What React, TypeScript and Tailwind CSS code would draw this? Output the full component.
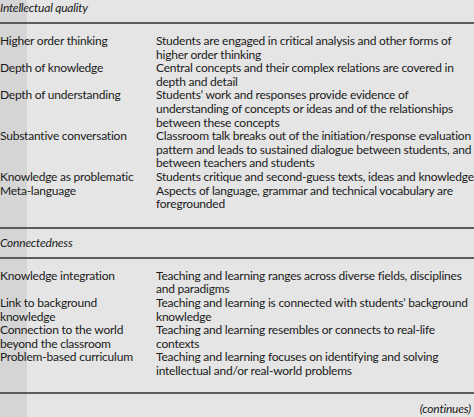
const intellectual: [string[], string[]][] = [
  [["Higher order thinking"], ["Students are engaged in critical analysis and other forms of", "higher order thinking"]],
  [["Depth of knowledge"], ["Central concepts and their complex relations are covered in", "depth and detail"]],
  [["Depth of understanding"], ["Students’ work and responses provide evidence of", "understanding of concepts or ideas and of the relationships", "between these concepts"]],
  [["Substantive conversation"], ["Classroom talk breaks out of the initiation/response evaluation", "pattern and leads to sustained dialogue between students, and", "between teachers and students"]],
  [["Knowledge as problematic"], ["Students critique and second-guess texts, ideas and knowledge"]],
  [["Meta-language"], ["Aspects of language, grammar and technical vocabulary are", "foregrounded"]],
];

const connectedness: [string[], string[]][] = [
  [["Knowledge integration"], ["Teaching and learning ranges across diverse fields, disciplines", "and paradigms"]],
  [["Link to background", "knowledge"], ["Teaching and learning is connected with students’ background", "knowledge"]],
  [["Connection to the world", "beyond the classroom"], ["Teaching and learning resembles or connects to real-life", "contexts"]],
  [["Problem-based curriculum"], ["Teaching and learning focuses on identifying and solving", "intellectual and/or real-world problems"]],
];

const Rule = ({ className = "" }: { className?: string }) => (
  <div className={`h-[2px] w-full bg-[#5c5c5c] ${className}`} />
);

const Rows = ({ rows }: { rows: [string[], string[]][] }) => (
  <div className="flex flex-col">
    {rows.map(([term, desc], i) => (
      <div key={i} className="flex">
        <div className="w-[156px] shrink-0">
          {term.map((l) => (
            <div key={l} className="whitespace-nowrap">{l}</div>
          ))}
        </div>
        <div className="flex-1">
          {desc.map((l) => (
            <div key={l} className="whitespace-nowrap">{l}</div>
          ))}
        </div>
      </div>
    ))}
  </div>
);

export default function App() {
  return (
    <div
      className="w-[474px] h-[417px] overflow-hidden bg-[linear-gradient(to_right,#d5d5d5_27px,#e5e5e5_27px)] text-[#1a1a1a] text-[12px] leading-[13.6px] tracking-[-0.22px]"
      style={{ fontFamily: "Lato, 'Open Sans', sans-serif" }}
    >
      <div className="pt-[1px] leading-[14px] italic">Intellectual quality</div>
      <Rule className="mt-[7px]" />
      <div className="mt-[10px]">
        <Rows rows={intellectual} />
      </div>
      <Rule className="mt-[16px]" />
      <div className="mt-[7px] leading-[14px] italic">Connectedness</div>
      <Rule className="mt-[7px]" />
      <div className="mt-[10px]">
        <Rows rows={connectedness} />
      </div>
      <Rule className="mt-[15px]" />
      <div className="mt-[8px] pr-[3px] text-right leading-[14px] italic">(continues)</div>
    </div>
  );
}
